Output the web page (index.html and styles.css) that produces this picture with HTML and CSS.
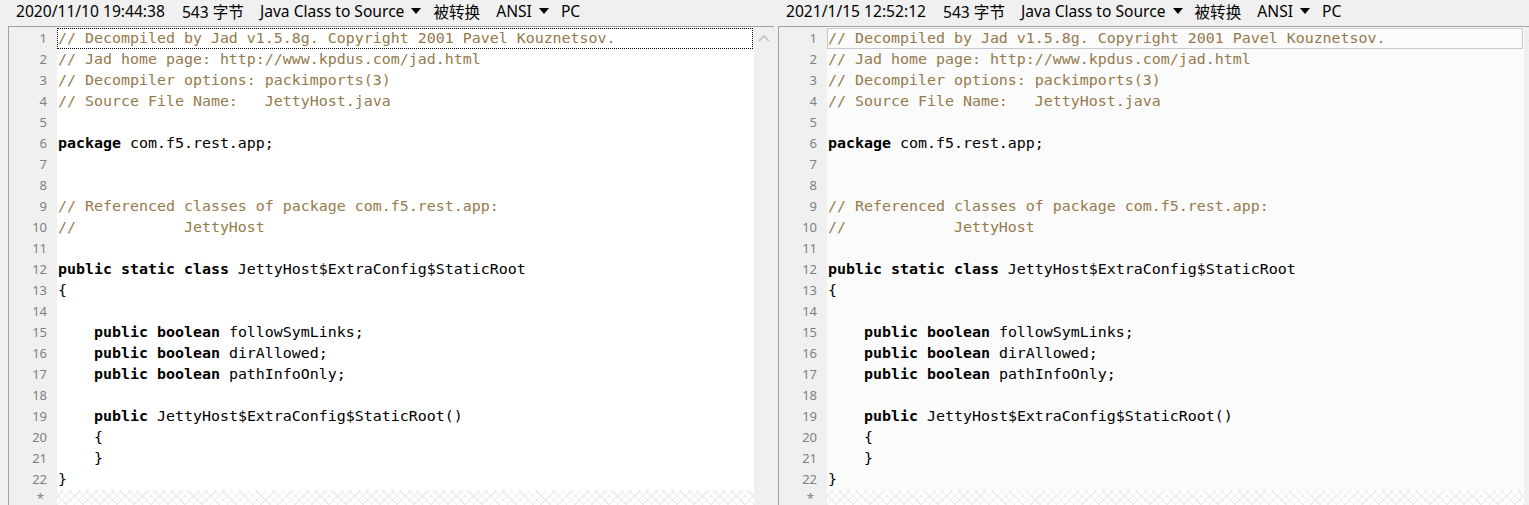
FILE: index.html
```html
<!DOCTYPE html>
<html lang="zh-CN">
<head>
    <meta charset="UTF-8">
    <title>Compare</title>
    <link rel="stylesheet" href="styles.css">
</head>
<body>
    <div class="split">
        <div class="side side-left">
            <div class="info-bar">
                <span>2020/11/10 19:44:38</span>
                <span>543 字节</span>
                <span class="drop">Java Class to Source<i class="caret"></i></span>
                <span>被转换</span>
                <span class="drop">ANSI<i class="caret"></i></span>
                <span>PC</span>
            </div>
            <div class="pane">
                <div class="gutter">
                    <div>1</div><div>2</div><div>3</div><div>4</div><div>5</div><div>6</div>
                    <div>7</div><div>8</div><div>9</div><div>10</div><div>11</div><div>12</div>
                    <div>13</div><div>14</div><div>15</div><div>16</div><div>17</div><div>18</div>
                    <div>19</div><div>20</div><div>21</div><div>22</div><div class="star">*</div>
                </div>
                <div class="code">
                    <div class="line current-focus"><span class="cm">// Decompiled by Jad v1.5.8g. Copyright 2001 Pavel Kouznetsov.</span></div>
                    <div class="line"><span class="cm">// Jad home page: http://www.kpdus.com/jad.html</span></div>
                    <div class="line"><span class="cm">// Decompiler options: packimports(3)</span></div>
                    <div class="line"><span class="cm">// Source File Name:   JettyHost.java</span></div>
                    <div class="line"></div>
                    <div class="line"><b>package</b> com.f5.rest.app;</div>
                    <div class="line"></div>
                    <div class="line"></div>
                    <div class="line"><span class="cm">// Referenced classes of package com.f5.rest.app:</span></div>
                    <div class="line"><span class="cm">//            JettyHost</span></div>
                    <div class="line"></div>
                    <div class="line"><b>public static class</b> JettyHost$ExtraConfig$StaticRoot</div>
                    <div class="line">{</div>
                    <div class="line"></div>
                    <div class="line">    <b>public boolean</b> followSymLinks;</div>
                    <div class="line">    <b>public boolean</b> dirAllowed;</div>
                    <div class="line">    <b>public boolean</b> pathInfoOnly;</div>
                    <div class="line"></div>
                    <div class="line">    <b>public</b> JettyHost$ExtraConfig$StaticRoot()</div>
                    <div class="line">    {</div>
                    <div class="line">    }</div>
                    <div class="line">}</div>
                    <div class="past-end"></div>
                </div>
                <div class="vscroll">
                    <svg width="12" height="8" viewBox="0 0 12 8"><polyline points="1,7 6,2 11,7" fill="none" stroke="#c2c2c2" stroke-width="1.6"/></svg>
                </div>
            </div>
        </div>

        <div class="side side-right">
            <div class="info-bar">
                <span>2021/1/15 12:52:12</span>
                <span>543 字节</span>
                <span class="drop">Java Class to Source<i class="caret"></i></span>
                <span>被转换</span>
                <span class="drop">ANSI<i class="caret"></i></span>
                <span>PC</span>
            </div>
            <div class="pane pane-inactive">
                <div class="gutter">
                    <div>1</div><div>2</div><div>3</div><div>4</div><div>5</div><div>6</div>
                    <div>7</div><div>8</div><div>9</div><div>10</div><div>11</div><div>12</div>
                    <div>13</div><div>14</div><div>15</div><div>16</div><div>17</div><div>18</div>
                    <div>19</div><div>20</div><div>21</div><div>22</div><div class="star">*</div>
                </div>
                <div class="code">
                    <div class="line current-idle"><span class="cm">// Decompiled by Jad v1.5.8g. Copyright 2001 Pavel Kouznetsov.</span></div>
                    <div class="line"><span class="cm">// Jad home page: http://www.kpdus.com/jad.html</span></div>
                    <div class="line"><span class="cm">// Decompiler options: packimports(3)</span></div>
                    <div class="line"><span class="cm">// Source File Name:   JettyHost.java</span></div>
                    <div class="line"></div>
                    <div class="line"><b>package</b> com.f5.rest.app;</div>
                    <div class="line"></div>
                    <div class="line"></div>
                    <div class="line"><span class="cm">// Referenced classes of package com.f5.rest.app:</span></div>
                    <div class="line"><span class="cm">//            JettyHost</span></div>
                    <div class="line"></div>
                    <div class="line"><b>public static class</b> JettyHost$ExtraConfig$StaticRoot</div>
                    <div class="line">{</div>
                    <div class="line"></div>
                    <div class="line">    <b>public boolean</b> followSymLinks;</div>
                    <div class="line">    <b>public boolean</b> dirAllowed;</div>
                    <div class="line">    <b>public boolean</b> pathInfoOnly;</div>
                    <div class="line"></div>
                    <div class="line">    <b>public</b> JettyHost$ExtraConfig$StaticRoot()</div>
                    <div class="line">    {</div>
                    <div class="line">    }</div>
                    <div class="line">}</div>
                    <div class="past-end"></div>
                </div>
                <div class="vscroll">
                    <svg width="12" height="8" viewBox="0 0 12 8"><polyline points="1,7 6,2 11,7" fill="none" stroke="#c2c2c2" stroke-width="1.6"/></svg>
                </div>
            </div>
        </div>
    </div>
</body>
</html>
```

FILE: styles.css
```css
html, body {
    margin: 0;
    padding: 0;
    height: 100%;
    overflow: hidden;
}

body {
    background-color: #f0f0f0;
    font-family: 'Noto Sans', 'Noto Sans CJK SC', sans-serif;
    color: #000;
}

.split {
    display: flex;
    gap: 4px;
    padding-left: 8px;
    width: max-content;
}

.side {
    display: flex;
    flex-direction: column;
    width: 766px;
}

.info-bar {
    height: 26px;
    display: flex;
    align-items: center;
    gap: 16px;
    padding-left: 8px;
    padding-bottom: 4px;
    box-sizing: border-box;
    font-size: 15.6px;
    white-space: nowrap;
}

.info-bar span:nth-child(2) {
    margin-left: 1px;
}

.drop {
    display: flex;
    align-items: center;
    gap: 7px;
    margin-right: -4px;
}

.caret {
    display: inline-block;
    width: 0;
    height: 0;
    border-left: 5.5px solid transparent;
    border-right: 5.5px solid transparent;
    border-top: 6px solid #000;
}

.pane {
    display: flex;
    border: 1px solid #a0a0a0;
    border-right: none;
    height: 520px;
    background-color: #fff;
}

.gutter {
    width: 48px;
    background-color: #f0f0f0;
    padding-top: 1px;
    box-sizing: border-box;
    font-family: 'Noto Sans', sans-serif;
    font-size: 13px;
    color: #808080;
    text-align: right;
}

.gutter div {
    height: 21px;
    line-height: 21px;
    padding-right: 10px;
}

.gutter .star {
    padding-right: 13px;
    line-height: 17px;
}

.code {
    flex: 1;
    padding-top: 1px;
    font-family: 'DejaVu Sans Mono', monospace;
    font-size: 14.95px;
    background-color: #fff;
}

.pane-inactive .code {
    background-color: #fbfbfb;
}

.line {
    height: 21px;
    line-height: 21px;
    white-space: pre;
    box-sizing: border-box;
    padding-left: 1px;
}

.line b {
    font-weight: bold;
}

.cm {
    color: #957a4c;
}

.current-focus {
    border: 1px dotted #000;
    padding-left: 0;
    line-height: 19px;
    margin-right: 1px;
}

.current-idle {
    border: 1px solid #c8c8c8;
    padding-left: 0;
    line-height: 19px;
    margin-right: 1px;
}

.past-end {
    height: 40px;
    background-color: #fff;
    background-image:
        repeating-linear-gradient(45deg, #ececec 0 1px, transparent 1px 6px),
        repeating-linear-gradient(-45deg, #ececec 0 1px, transparent 1px 6px);
}

.vscroll {
    width: 20px;
    background-color: #f0f0f0;
    display: flex;
    justify-content: center;
    padding-top: 7px;
    box-sizing: border-box;
}

.vscroll svg {
    display: block;
}
```
